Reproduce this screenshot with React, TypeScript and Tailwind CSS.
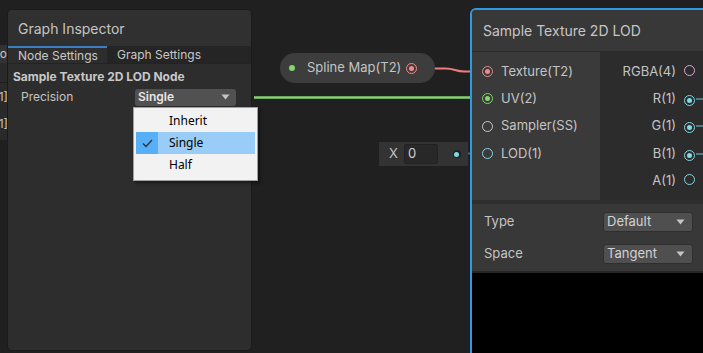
import React from "react";

const Port = ({ color, filled }: { color: string; filled?: boolean }) => (
  <span
    className="inline-flex items-center justify-center w-[11px] h-[11px] rounded-full border-[1.5px] shrink-0"
    style={{ borderColor: color }}
  >
    {filled && <span className="w-[5px] h-[5px] rounded-full" style={{ background: color }} />}
  </span>
);

const Arrow = () => (
  <svg width="9" height="6" viewBox="0 0 9 6" className="shrink-0">
    <path d="M0.5 0.5 L8.5 0.5 L4.5 5.5 Z" fill="#c4c4c4" />
  </svg>
);

export default function App() {
  const font = { fontFamily: "Inter, 'Noto Sans', sans-serif" };
  return (
    <div className="relative w-[703px] h-[353px] overflow-hidden bg-[#202020] text-[#c4c4c4]" style={font}>
      {/* behind node at left edge */}
      <div className="absolute left-[-60px] top-[45px] w-[68px] h-[95px] bg-[#2a2a2a] text-[12px]">
        <div className="h-[18px] bg-[#333] flex items-center justify-end pr-[1px] text-[#c4c4c4]">o</div>
        <div className="h-[20px] border-b border-[#1c1c1c]"></div>
        <div className="h-[27px] flex items-center justify-end text-[#c4c4c4]">1]</div>
        <div className="h-[27px] flex items-center justify-end text-[#c4c4c4]">1]</div>
      </div>

      {/* wires */}
      <svg className="absolute inset-0" width="703" height="353">
        <line x1="254" y1="97.5" x2="480" y2="97.5" stroke="#86d46f" strokeWidth="2.5" />
        <path d="M428 68.5 L446 68.5 C454 68.5 456 71.5 464 71.5 L482 71.5" stroke="#ef7c7c" strokeWidth="2" fill="none" />
        <line x1="460" y1="153.5" x2="472" y2="153.5" stroke="#3d6a70" strokeWidth="2" />
        <line x1="472" y1="153.5" x2="484" y2="153.5" stroke="#7fdbe3" strokeWidth="2" />
      </svg>

      {/* Graph inspector */}
      <div className="absolute left-[7px] top-[9px] w-[245px] h-[342px] rounded-[5px] bg-[#2d2d2d] border border-[#1b1b1b] overflow-hidden flex flex-col">
        <div className="h-[36px] bg-[#303030] flex items-center pl-[10px] text-[14px] text-[#c4c4c4]">Graph Inspector</div>
        <div className="h-[18px] flex text-[12px] bg-[#252525] border-b border-[#232323]">
          <div className="w-[99px] bg-[#2d2d2d] border-t-2 border-[#3a7fc4] flex items-center pl-[10px] text-[#c8c8c8]">Node Settings</div>
          <div className="flex items-center pl-[10px] text-[#c8c8c8]">Graph Settings</div>
        </div>
        <div className="pl-[5px] pt-[4px] text-[12px] font-bold text-[#c8c8c8]">Sample Texture 2D LOD Node</div>
        <div className="flex items-center pl-[13px] mt-[2px] text-[12px] h-[18px]">
          <span className="w-[114px]">Precision</span>
          <div className="w-[101px] h-[17px] rounded-[3px] bg-[#515151] flex items-center justify-between px-[3px] pr-[6px] text-[#e6e6e6] font-semibold">
            <span>Single</span>
            <Arrow />
          </div>
        </div>
      </div>

      {/* popup menu */}
      <div
        className="absolute left-[133px] top-[107px] w-[125px] h-[74px] bg-[#f2f2f2] border border-[#a0a0a0] shadow-[2px_2px_3px_rgba(0,0,0,0.45)] text-[12px] text-black py-[2px] px-[2px]"
        style={{ fontFamily: "'Noto Sans', 'Open Sans', sans-serif" }}
      >
        <div className="h-[22px] flex items-center pl-[33px]">Inherit</div>
        <div className="h-[22px] flex items-center bg-[#99ccf7]">
          <div className="w-[22px] h-full bg-[#57aff6] flex items-center justify-center">
            <svg width="11" height="9" viewBox="0 0 11 9">
              <path d="M1 4.5 L4 7.5 L10 1" stroke="#2a3440" strokeWidth="1.3" fill="none" />
            </svg>
          </div>
          <span className="pl-[11px]">Single</span>
        </div>
        <div className="h-[22px] flex items-center pl-[33px]">Half</div>
      </div>

      {/* Spline Map node */}
      <div className="absolute left-[280px] top-[53px] w-[155px] h-[30px] rounded-full bg-[#3d3d3d] flex items-center pl-[9px] text-[13px] text-[#c4c4c4]">
        <span className="w-[6px] h-[6px] rounded-full bg-[#86d46f]" />
        <span className="ml-[12px]">Spline Map(T2)</span>
        <span className="ml-[5px] mb-[2px]"><Port color="#f08a8a" filled /></span>
      </div>

      {/* X node */}
      <div className="absolute left-[379px] top-[142px] w-[89px] h-[24px] bg-[#333333] flex items-center text-[13px]">
        <span className="ml-[10px] text-[#c4c4c4]">X</span>
        <div className="ml-[6px] w-[34px] h-[20px] bg-[#282828] rounded-[2px] border border-[#222] flex items-center pl-[3px] text-[#d0d0d0]">0</div>
        <span className="ml-[15px] w-[8px] h-[8px] rounded-full bg-[#1f1f1f] flex items-center justify-center">
          <span className="w-[5px] h-[5px] rounded-full bg-[#7fdbe3]" />
        </span>
      </div>

      {/* Main node */}
      <div className="absolute left-[470px] top-[8px] w-[250px] h-[360px] rounded-[6px] border-2 border-[#2e9ae2] overflow-hidden flex flex-col bg-[#383838]">
        <div className="h-[42px] bg-[#383838] flex items-center pl-[11px] text-[14px] text-[#c6c6c6] border-b border-[#2a2a2a]">Sample Texture 2D LOD</div>
        <div className="flex h-[148px]">
          <div className="w-[128px] bg-[#3a3a3a] pt-[6px] text-[13px] text-[#c4c4c4]">
            {[
              ["Texture(T2)", "#f08a8a", true],
              ["UV(2)", "#86d46f", true],
              ["Sampler(SS)", "#c8c8c8", false],
              ["LOD(1)", "#7fdbe3", false],
            ].map(([l, c, f]) => (
              <div key={l as string} className="h-[27.3px] flex items-center pl-[10px]">
                <Port color={c as string} filled={f as boolean} />
                <span className="ml-[8px]">{l as string}</span>
              </div>
            ))}
          </div>
          <div className="flex-1 bg-[#2c2c2c] pt-[6px] text-[13px] text-[#c4c4c4]">
            {[
              ["RGBA(4)", "#d9a7d9", false, false],
              ["R(1)", "#7fdbe3", true, true],
              ["G(1)", "#7fdbe3", true, true],
              ["B(1)", "#7fdbe3", true, true],
              ["A(1)", "#7fdbe3", false, false],
            ].map(([l, c, f, w]) => (
              <div key={l as string} className="h-[27.3px] flex items-center">
                <span className="w-[76px] text-right">{l as string}</span>
                <span className="ml-[8px]"><Port color={c as string} filled={f as boolean} /></span>
                {w && <span className="ml-[1px] w-[10px] h-[2px] bg-[#4d7a80]" />}
              </div>
            ))}
          </div>
        </div>
        <div className="h-[4px] bg-[#2e2e2e]" />
        <div className="h-[69px] bg-[#383838] text-[13px] text-[#c4c4c4] pt-[2px] border-b-2 border-[#262626]">
          {[
            ["Type", "Default"],
            ["Space", "Tangent"],
          ].map(([a, b]) => (
            <div key={a} className="h-[32px] flex items-center pl-[12px]">
              <span className="w-[119px]">{a}</span>
              <div className="w-[90px] h-[20px] rounded-[3px] bg-[#4f4f4f] border border-[#2f2f2f] flex items-center justify-between pl-[3px] pr-[7px] text-[#d2d2d2]">
                <span>{b}</span>
                <Arrow />
              </div>
            </div>
          ))}
        </div>
        <div className="flex-1 bg-black" />
      </div>
    </div>
  );
}
